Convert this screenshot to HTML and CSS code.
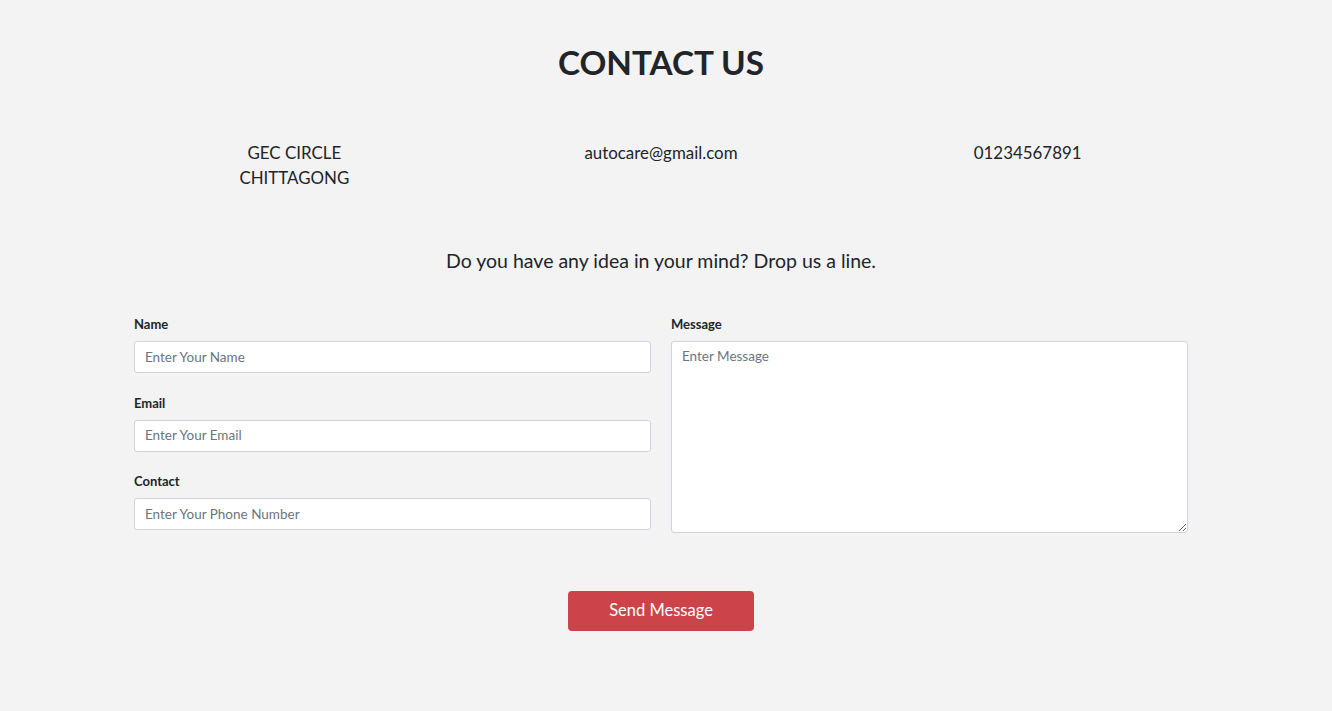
FILE: index.html
```html
<!DOCTYPE html>
<html lang="en">
<head>
<meta charset="utf-8">
<title>Contact Us</title>
<link rel="stylesheet" href="styles.css">
</head>
<body>
<main class="page">
  <section class="contact">
    <h1 class="title">CONTACT US</h1>
    <div class="info">
      <div class="info-item">GEC CIRCLE<br>CHITTAGONG</div>
      <div class="info-item">autocare@gmail.com</div>
      <div class="info-item">01234567891</div>
    </div>
    <p class="lead">Do you have any idea in your mind? Drop us a line.</p>
    <form class="form">
      <div class="col">
        <div class="group">
          <label class="label" for="name">Name</label>
          <input class="input" id="name" type="text" placeholder="Enter Your Name">
        </div>
        <div class="group">
          <label class="label" for="email">Email</label>
          <input class="input" id="email" type="email" placeholder="Enter Your Email">
        </div>
        <div class="group">
          <label class="label" for="contact">Contact</label>
          <input class="input" id="contact" type="text" placeholder="Enter Your Phone Number">
        </div>
      </div>
      <div class="col">
        <div class="group">
          <label class="label" for="message">Message</label>
          <textarea class="textarea" id="message" placeholder="Enter Message"></textarea>
        </div>
      </div>
      <div class="actions">
        <button class="btn" type="button">Send Message</button>
      </div>
    </form>
  </section>
</main>
</body>
</html>
```
FILE: styles.css
```css
* { box-sizing: border-box; }
html, body { margin: 0; padding: 0; }
body {
  background: #f3f3f3;
  color: #212529;
  font-family: Lato, "Liberation Sans", sans-serif;
  height: 711px;
  overflow: hidden;
}
.page {
  width: 1322px;
}
.contact {
  width: 1100px;
  margin: 0 auto;
  padding-top: 41px;
}
.title {
  margin: 0;
  text-align: center;
  font-size: 33.3px;
  font-weight: 700;
  line-height: 43px;
  color: #212529;
}
.info {
  display: grid;
  grid-template-columns: repeat(3, 1fr);
  margin-top: 56px;
}
.info-item {
  text-align: center;
  font-size: 16.9px;
  line-height: 25px;
}
.lead {
  margin: 56px 0 0;
  text-align: center;
  font-size: 19.5px;
  line-height: 30px;
}
.form {
  margin: 38px 23px 0;
  display: grid;
  grid-template-columns: 1fr 1fr;
  column-gap: 20px;
}
.col {
  display: flex;
  flex-direction: column;
  gap: 19.5px;
}
.group {
  display: flex;
  flex-direction: column;
}
.label {
  font-size: 13px;
  font-weight: 700;
  line-height: 20px;
  margin-bottom: 7px;
}
.input, .textarea {
  font-family: Lato, "Liberation Sans", sans-serif;
  font-size: 13.5px;
  color: #495057;
  background: #fff;
  border: 1px solid #ced4da;
  border-radius: 3px;
  padding: 0 10px;
  outline: none;
}
.input { height: 32px; padding-bottom: 1px; }
.textarea {
  height: 192px;
  padding-top: 6px;
  resize: vertical;
}
.input::placeholder, .textarea::placeholder { color: #6c757d; opacity: 1; }
.actions {
  grid-column: 1 / 3;
  display: flex;
  justify-content: center;
  margin-top: 58px;
}
.btn {
  width: 186px;
  height: 40px;
  background: #cc434a;
  color: #fff;
  border: 0;
  border-radius: 4px;
  font-family: Lato, "Liberation Sans", sans-serif;
  font-size: 16.5px;
  padding: 0 0 2px;
}
```
